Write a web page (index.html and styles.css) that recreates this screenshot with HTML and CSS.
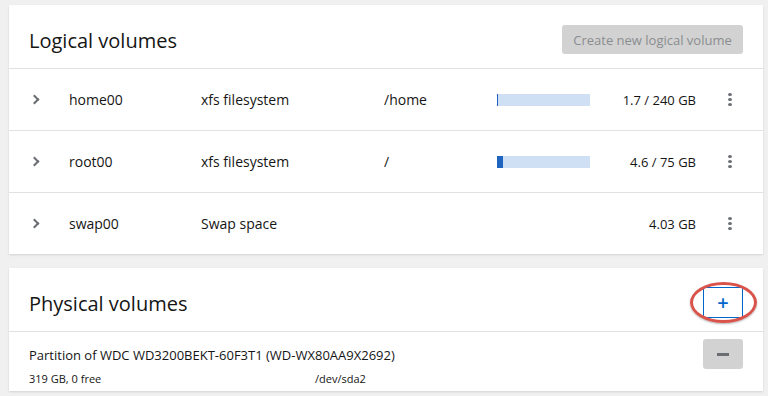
FILE: index.html
```html
<!DOCTYPE html>
<html lang="en">
<head>
  <meta charset="UTF-8">
  <title>Storage - Volume group</title>
  <link rel="stylesheet" href="styles.css">
</head>
<body>

  <div class="card">
    <div class="card-header">
      <h2>Logical volumes</h2>
      <button class="btn-disabled">Create new logical volume</button>
    </div>

    <div class="lv-row">
      <span class="chevron"></span>
      <span>home00</span>
      <span>xfs filesystem</span>
      <span>/home</span>
      <div class="usage"><div class="usage-fill" style="width: 1px"></div></div>
      <span class="size">1.7 / 240 GB</span>
      <span class="kebab"><i></i><i></i><i></i></span>
    </div>

    <div class="lv-row">
      <span class="chevron"></span>
      <span>root00</span>
      <span>xfs filesystem</span>
      <span>/</span>
      <div class="usage"><div class="usage-fill" style="width: 6px"></div></div>
      <span class="size">4.6 / 75 GB</span>
      <span class="kebab"><i></i><i></i><i></i></span>
    </div>

    <div class="lv-row">
      <span class="chevron"></span>
      <span>swap00</span>
      <span>Swap space</span>
      <span></span>
      <span></span>
      <span class="size">4.03 GB</span>
      <span class="kebab"><i></i><i></i><i></i></span>
    </div>
  </div>

  <div class="card">
    <div class="card-header">
      <h2>Physical volumes</h2>
      <div class="highlight">
        <button class="btn-icon">+</button>
        <span class="ring"></span>
      </div>
    </div>

    <div class="pv-row">
      <div class="pv-info">
        <div class="pv-name">Partition of WDC WD3200BEKT-60F3T1 (WD-WX80AA9X2692)</div>
        <div class="pv-meta">
          <span class="pv-free">319 GB, 0 free</span>
          <span>/dev/sda2</span>
        </div>
      </div>
      <button class="btn-remove"><span class="minus"></span></button>
    </div>
  </div>

</body>
</html>
```

FILE: styles.css
```css
body {
  font-family: "Open Sans", "Liberation Sans", sans-serif;
  background: #f0f0f0;
  color: #151515;
  margin: 0;
  padding: 5px 5px 0 9px;
}

.card {
  background: white;
  box-shadow: 0 1px 2px rgba(0,0,0,0.12);
  margin-bottom: 14px;
}

.card-header {
  height: 64px;
  padding: 20px 20px 0;
  display: flex;
  align-items: flex-start;
  justify-content: space-between;
  border-bottom: 1px solid #e2e2e2;
  box-sizing: border-box;
}

.card-header h2 {
  margin: 2px 0 0;
  font-size: 20px;
  line-height: 28px;
  font-weight: 400;
}

.btn-disabled {
  background: #d2d2d2;
  color: #8a8d90;
  border: none;
  border-radius: 3px;
  font-family: inherit;
  font-size: 13px;
  width: 181px;
  height: 29px;
  padding: 0;
}

.lv-row {
  height: 62px;
  padding: 0 20px;
  display: grid;
  grid-template-columns: 40px 132px 183px 113px 93px 106px 47px;
  align-items: center;
  font-size: 14px;
  border-bottom: 1px solid #e2e2e2;
  box-sizing: border-box;
}

.lv-row:last-child {
  height: 61px;
  border-bottom: none;
}

.chevron {
  width: 5px;
  height: 5px;
  margin-left: 2px;
  border-right: 2px solid #6a6e73;
  border-top: 2px solid #6a6e73;
  transform: rotate(45deg);
}

.usage {
  height: 12px;
  background: #cfe0f4;
}

.usage-fill {
  height: 100%;
  background: #1f65c0;
}

.size {
  text-align: right;
  font-size: 13px;
}

.kebab {
  justify-self: end;
  margin-right: 11px;
  display: flex;
  flex-direction: column;
  gap: 2px;
}

.kebab i {
  width: 4px;
  height: 3px;
  border-radius: 50%;
  background: #6a6e73;
}

.highlight {
  position: relative;
  margin-top: -1px;
}

.btn-icon {
  width: 40px;
  height: 31px;
  background: white;
  border: 1px solid #0066cc;
  color: #0066cc;
  font-size: 20px;
  font-weight: 600;
  font-family: inherit;
  line-height: 1;
  padding: 0;
}

.ring {
  position: absolute;
  left: -13px;
  top: -5px;
  width: 61px;
  height: 35px;
  border: 3px solid #d9534a;
  border-radius: 50%;
  box-shadow: 0 1px 2px rgba(0,0,0,0.3);
}

.pv-row {
  height: 59px;
  padding: 7px 20px 0;
  display: flex;
  justify-content: space-between;
  align-items: flex-start;
  box-sizing: border-box;
}

.pv-name {
  font-size: 13px;
  line-height: 32px;
}

.pv-meta {
  display: flex;
  font-size: 11px;
  margin-top: 0;
}

.pv-free {
  width: 286px;
}

.btn-remove {
  width: 40px;
  height: 30px;
  background: #d2d2d2;
  border: none;
  border-radius: 3px;
  padding: 0;
  display: flex;
  align-items: center;
  justify-content: center;
}

.minus {
  width: 12px;
  height: 3px;
  background: #6a6e73;
}
```
